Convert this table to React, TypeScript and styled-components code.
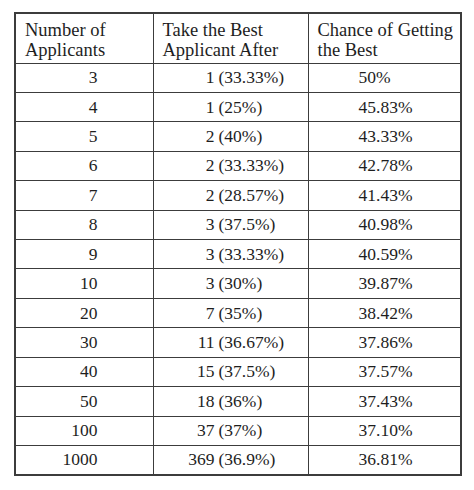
import styled, { createGlobalStyle } from 'styled-components';

const GlobalStyle = createGlobalStyle`
    html, body {
        margin: 0;
        padding: 0;
        background: #ffffff;
    }
`;

const rows: [string, string, string, string][] = [
    ['3', '1', '(33.33%)', '50%'],
    ['4', '1', '(25%)', '45.83%'],
    ['5', '2', '(40%)', '43.33%'],
    ['6', '2', '(33.33%)', '42.78%'],
    ['7', '2', '(28.57%)', '41.43%'],
    ['8', '3', '(37.5%)', '40.98%'],
    ['9', '3', '(33.33%)', '40.59%'],
    ['10', '3', '(30%)', '39.87%'],
    ['20', '7', '(35%)', '38.42%'],
    ['30', '11', '(36.67%)', '37.86%'],
    ['40', '15', '(37.5%)', '37.57%'],
    ['50', '18', '(36%)', '37.43%'],
    ['100', '37', '(37%)', '37.10%'],
    ['1000', '369', '(36.9%)', '36.81%'],
];

const App = () => {
    return (
        <Page>
            <GlobalStyle />
            <Table>
                <colgroup>
                    <col style={{width: 138}} />
                    <col style={{width: 155}} />
                    <col style={{width: 153}} />
                </colgroup>
                <thead>
                    <HeadRow>
                        <HeadCell>Number of<br />Applicants</HeadCell>
                        <HeadCell>Take the Best<br />Applicant After</HeadCell>
                        <HeadCell>Chance of Getting<br />the Best</HeadCell>
                    </HeadRow>
                </thead>
                <tbody>
                    {rows.map(([n, after, pct, chance]) => (
                        <Row key={n}>
                            <CountCell>{n}</CountCell>
                            <AfterCell>
                                <AfterInner>
                                    <AfterNum>{after}</AfterNum>
                                    <AfterPct>{pct}</AfterPct>
                                </AfterInner>
                            </AfterCell>
                            <ChanceCell>{chance}</ChanceCell>
                        </Row>
                    ))}
                </tbody>
            </Table>
        </Page>
    );
};

export default App;

const serif = `"Liberation Serif", "DejaVu Serif", serif`;

const Page = styled.div`
    padding: 12px 0 0 14px;
`;

const Table = styled.table`
    border-collapse: collapse;
    table-layout: fixed;
    width: 446px;
    border: 2px solid #3c3c3c;
    font-family: ${serif};
    color: #1e1e1e;

    td, th {
        border: 1.5px solid #3c3c3c;
        padding: 0;
        font-family: ${serif};
        color: #1e1e1e;
    }
`;

const HeadRow = styled.tr`
    height: 50px;
`;

const HeadCell = styled.th`
    text-align: left;
    font-weight: normal;
    font-size: 18.5px;
    line-height: 20px;
    padding: 3px 0 0 9px !important;
    vertical-align: middle;
`;

const Row = styled.tr`
    height: 29.43px;
`;

const Cell = styled.td`
    font-size: 17.5px;
    vertical-align: middle;
`;

const CountCell = styled(Cell)`
    text-align: right;
    padding-right: 55px !important;
`;

const AfterCell = styled(Cell)``;

const AfterInner = styled.div`
    display: flex;
    align-items: baseline;
`;

const AfterNum = styled.span`
    width: 61px;
    text-align: right;
`;

const AfterPct = styled.span`
    margin-left: 4px;
`;

const ChanceCell = styled(Cell)`
    padding-left: 50px !important;
`;
